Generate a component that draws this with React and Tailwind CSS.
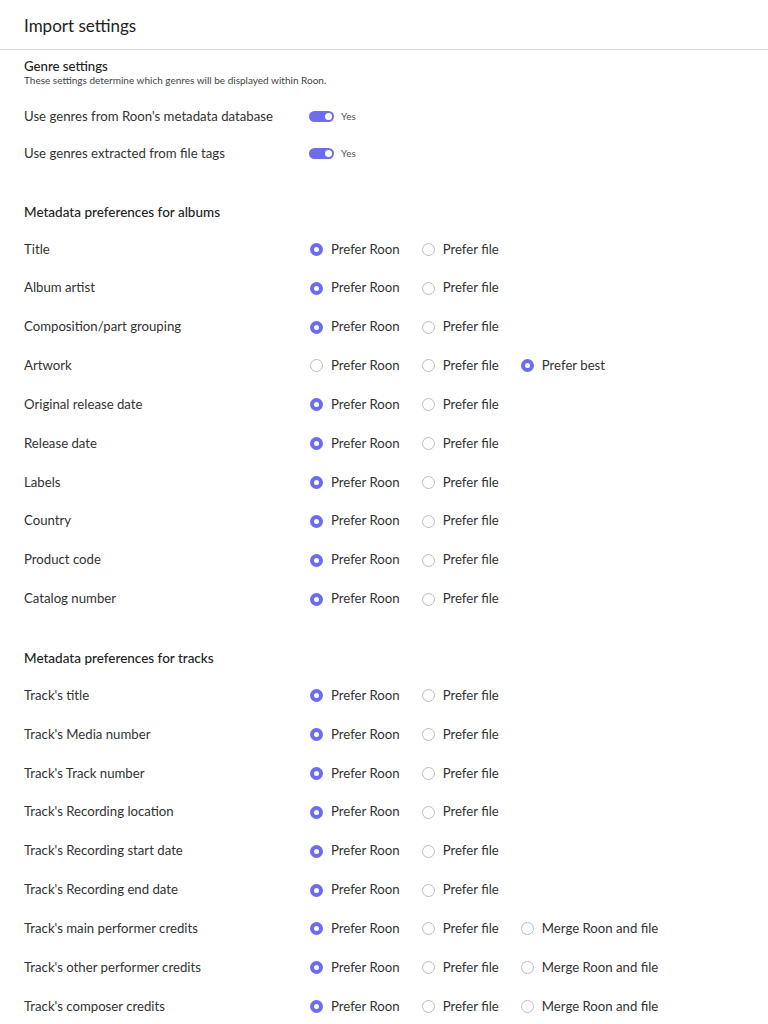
import React from "react";

const albumRows = [
    { label: "Title", options: ["Prefer Roon", "Prefer file"], selected: 0 },
    { label: "Album artist", options: ["Prefer Roon", "Prefer file"], selected: 0 },
    { label: "Composition/part grouping", options: ["Prefer Roon", "Prefer file"], selected: 0 },
    { label: "Artwork", options: ["Prefer Roon", "Prefer file", "Prefer best"], selected: 2 },
    { label: "Original release date", options: ["Prefer Roon", "Prefer file"], selected: 0 },
    { label: "Release date", options: ["Prefer Roon", "Prefer file"], selected: 0 },
    { label: "Labels", options: ["Prefer Roon", "Prefer file"], selected: 0 },
    { label: "Country", options: ["Prefer Roon", "Prefer file"], selected: 0 },
    { label: "Product code", options: ["Prefer Roon", "Prefer file"], selected: 0 },
    { label: "Catalog number", options: ["Prefer Roon", "Prefer file"], selected: 0 },
];

const merge = ["Prefer Roon", "Prefer file", "Merge Roon and file"];
const two = ["Prefer Roon", "Prefer file"];

const trackRows = [
    { label: "Track's title", options: two, selected: 0 },
    { label: "Track's Media number", options: two, selected: 0 },
    { label: "Track's Track number", options: two, selected: 0 },
    { label: "Track's Recording location", options: two, selected: 0 },
    { label: "Track's Recording start date", options: two, selected: 0 },
    { label: "Track's Recording end date", options: two, selected: 0 },
    { label: "Track's main performer credits", options: merge, selected: 0 },
    { label: "Track's other performer credits", options: merge, selected: 0 },
    { label: "Track's composer credits", options: merge, selected: 0 },
];

function Radio({ checked, label }) {
    return (
        <label className="flex items-center gap-[8px] mr-[22px]">
            {checked ? (
                <span className="w-[13px] h-[13px] rounded-full bg-[#6b6cf0] flex items-center justify-center">
                    <span className="w-[5px] h-[5px] rounded-full bg-white" />
                </span>
            ) : (
                <span className="w-[13px] h-[13px] rounded-full border-[1.5px] border-[#bdbdbd] bg-white" />
            )}
            <span className="text-[13.2px] text-[#333]">{label}</span>
        </label>
    );
}

function Toggle() {
    return (
        <div className="flex items-center gap-[7px]">
            <span className="w-[25px] h-[11px] rounded-full bg-[#6b6cf0] flex items-center justify-end pr-[2px]">
                <span className="w-[7px] h-[7px] rounded-full bg-white" />
            </span>
            <span className="text-[10px] text-[#555]">Yes</span>
        </div>
    );
}

function PrefRow({ row }) {
    return (
        <div className="h-[38.85px] flex items-center">
            <div className="w-[286px] text-[13.2px] text-[#333]">{row.label}</div>
            <div className="flex items-center">
                {row.options.map((o, i) => (
                    <Radio key={o} label={o} checked={i === row.selected} />
                ))}
            </div>
        </div>
    );
}

export default function App() {
    return (
        <div className="w-[768px] h-[1024px] bg-white overflow-hidden text-[#333]" style={{ fontFamily: "Lato, 'Open Sans', sans-serif" }}>
            <div className="h-[50px] border-b border-[#dedede] flex items-center px-[24px] pt-[2px]">
                <h1 className="text-[17px] font-normal text-[#222]">Import settings</h1>
            </div>
            <div className="px-[24px]">
                <div className="pt-[8px]">
                    <h2 className="text-[13.2px] leading-[16px] font-medium text-[#222]">Genre settings</h2>
                    <p className="text-[10px] leading-[12px] text-[#444]">
                        These settings determine which genres will be displayed within Roon.
                    </p>
                </div>
                <div className="mt-[12px]">
                    <div className="h-[37px] flex items-center">
                        <div className="w-[285px] text-[13.2px]">Use genres from Roon's metadata database</div>
                        <Toggle />
                    </div>
                    <div className="h-[37px] flex items-center">
                        <div className="w-[285px] text-[13.2px]">Use genres extracted from file tags</div>
                        <Toggle />
                    </div>
                </div>

                <div className="mt-[23px]">
                    <h2 className="h-[35px] flex items-center text-[13.5px] font-medium text-[#222]">
                        Metadata preferences for albums
                    </h2>
                    {albumRows.map((r) => (
                        <PrefRow key={r.label} row={r} />
                    ))}
                </div>

                <div className="mt-[22px]">
                    <h2 className="h-[36px] flex items-center text-[13.5px] font-medium text-[#222]">
                        Metadata preferences for tracks
                    </h2>
                    {trackRows.map((r) => (
                        <PrefRow key={r.label} row={r} />
                    ))}
                </div>
            </div>
        </div>
    );
}
